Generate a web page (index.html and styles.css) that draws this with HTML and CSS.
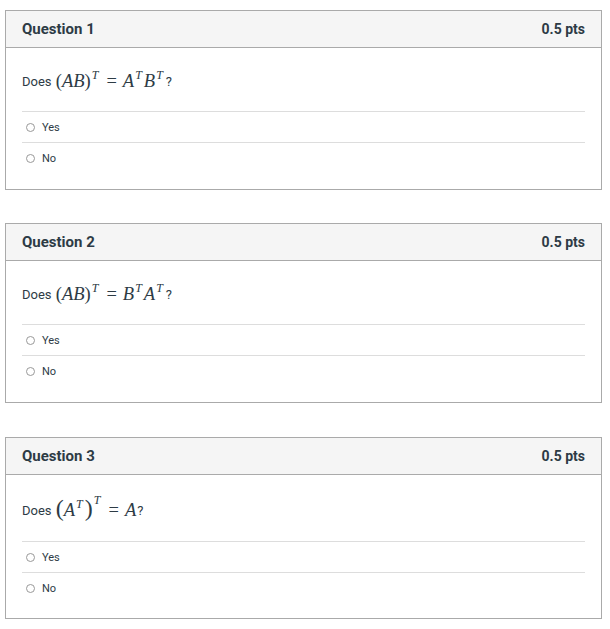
FILE: index.html
```html
<!DOCTYPE html>
<html>
<head>
<meta charset="utf-8">
<link rel="stylesheet" href="styles.css">
</head>
<body>
<div class="page">
  <div class="question">
    <div class="header"><span class="title">Question 1</span><span class="pts">0.5 pts</span></div>
    <div class="body">
      <div class="qtext">Does <span class="math"><span class="up">(</span><i>AB</i><span class="up">)</span><sup><i>T</i></sup><span class="eq">=</span><i>A</i><sup><i>T</i></sup><i>B</i><sup><i>T</i></sup></span>?</div>
      <div class="answers">
        <div class="answer"><span class="radio"></span>Yes</div>
        <div class="answer"><span class="radio"></span>No</div>
      </div>
    </div>
  </div>
  <div class="question">
    <div class="header"><span class="title">Question 2</span><span class="pts">0.5 pts</span></div>
    <div class="body">
      <div class="qtext">Does <span class="math"><span class="up">(</span><i>AB</i><span class="up">)</span><sup><i>T</i></sup><span class="eq">=</span><i>B</i><sup><i>T</i></sup><i>A</i><sup><i>T</i></sup></span>?</div>
      <div class="answers">
        <div class="answer"><span class="radio"></span>Yes</div>
        <div class="answer"><span class="radio"></span>No</div>
      </div>
    </div>
  </div>
  <div class="question last">
    <div class="header"><span class="title">Question 3</span><span class="pts">0.5 pts</span></div>
    <div class="body">
      <div class="qtext tall">Does <span class="math"><span class="up big">(</span><i>A</i><sup><i>T</i></sup><span class="up big">)</span><sup class="hi"><i>T</i></sup><span class="eq">=</span><i>A</i></span>?</div>
      <div class="answers">
        <div class="answer"><span class="radio"></span>Yes</div>
        <div class="answer"><span class="radio"></span>No</div>
      </div>
    </div>
  </div>
</div>
</body>
</html>
```

FILE: styles.css
```css
html, body {
  margin: 0;
  padding: 0;
  background: #ffffff;
}
.page {
  padding: 10px 8px 0 5px;
  font-family: Roboto, "Liberation Sans", Arial, sans-serif;
  color: #2d3b45;
}
.question {
  border: 1px solid #aaaaaa;
  margin-bottom: 33px;
  background: #fff;
}
.header {
  height: 36px;
  background: #f5f5f5;
  border-bottom: 1px solid #aaaaaa;
  display: flex;
  align-items: center;
  justify-content: space-between;
  padding: 0 16px;
  font-weight: bold;
  font-size: 14px;
}
.title {
  font-size: 15px;
}
.body {
  padding: 20px 16px 16px 16px;
}
.last {
  margin-top: 34px;
}
.last .body {
  padding-bottom: 15px;
}
.qtext {
  font-size: 13px;
  height: 28px;
  line-height: 28px;
  margin-bottom: 15px;
  display: flex;
  align-items: center;
  white-space: pre;
}
.qtext.tall {
  height: 32px;
  margin-bottom: 14px;
}
.math {
  font-family: "Liberation Serif", "Times New Roman", serif;
  font-size: 18.5px;
  display: inline-flex;
  align-items: baseline;
  margin-right: 1px;
  margin-left: 1px;
}
.math i {
  font-style: italic;
}
.math .up {
  font-style: normal;
}
.math .big {
  font-size: 24px;
  line-height: 1;
}
.math sup {
  font-size: 12px;
  position: relative;
  top: -8px;
  vertical-align: baseline;
  margin-left: 1px;
  margin-right: 2px;
}
.math sup.hi {
  top: -12px;
}
.math .eq {
  font-style: normal;
  margin: 0 6px;
}
.answer {
  border-top: 1px solid #dddddd;
  height: 30px;
  display: flex;
  align-items: center;
  font-size: 11px;
  padding-left: 4px;
}
.radio {
  width: 9px;
  height: 9px;
  border: 1px solid #999999;
  border-radius: 50%;
  box-sizing: border-box;
  margin-right: 7px;
  background: #fff;
}
```
